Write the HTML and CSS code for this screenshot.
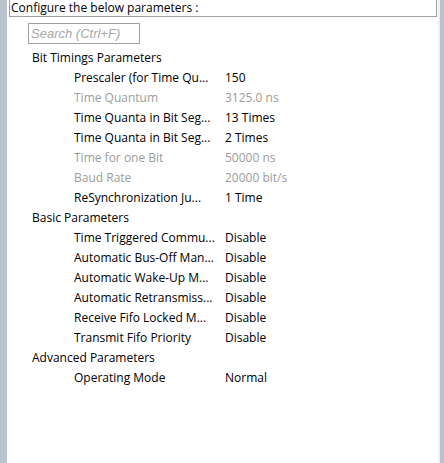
FILE: index.html
```html
<!DOCTYPE html>
<html lang="en">
<head>
  <meta charset="UTF-8" />
  <title>Parameter Settings</title>
  <meta name="viewport" content="width=device-width, initial-scale=1.0" />
  <link rel="stylesheet" href="styles.css">
</head>
<body>
  <div class="frame">
    <div class="side-bar"></div>
    <div class="panel">
      <div class="caption">Configure the below parameters :</div>
      <div class="search"><input type="text" placeholder="Search (Ctrl+F)" /></div>

      <div class="group">Bit Timings Parameters</div>
      <div class="param"><span class="name" title="Prescaler (for Time Quantum)">Prescaler (for Time Qu...</span><span class="value">150</span></div>
      <div class="param muted"><span class="name">Time Quantum</span><span class="value">3125.0 ns</span></div>
      <div class="param"><span class="name" title="Time Quanta in Bit Segment 1">Time Quanta in Bit Seg...</span><span class="value">13 Times</span></div>
      <div class="param"><span class="name" title="Time Quanta in Bit Segment 2">Time Quanta in Bit Seg...</span><span class="value">2 Times</span></div>
      <div class="param muted"><span class="name">Time for one Bit</span><span class="value">50000 ns</span></div>
      <div class="param muted"><span class="name">Baud Rate</span><span class="value">20000 bit/s</span></div>
      <div class="param"><span class="name" title="ReSynchronization Jump Width">ReSynchronization Ju...</span><span class="value">1 Time</span></div>

      <div class="group">Basic Parameters</div>
      <div class="param"><span class="name" title="Time Triggered Communication Mode">Time Triggered Commu...</span><span class="value">Disable</span></div>
      <div class="param"><span class="name" title="Automatic Bus-Off Management">Automatic Bus-Off Man...</span><span class="value">Disable</span></div>
      <div class="param"><span class="name" title="Automatic Wake-Up Mode">Automatic Wake-Up M...</span><span class="value">Disable</span></div>
      <div class="param"><span class="name" title="Automatic Retransmission">Automatic Retransmiss...</span><span class="value">Disable</span></div>
      <div class="param"><span class="name" title="Receive Fifo Locked Mode">Receive Fifo Locked M...</span><span class="value">Disable</span></div>
      <div class="param"><span class="name">Transmit Fifo Priority</span><span class="value">Disable</span></div>

      <div class="group">Advanced Parameters</div>
      <div class="param"><span class="name">Operating Mode</span><span class="value">Normal</span></div>
    </div>
    <div class="edge"></div>
  </div>
</body>
</html>
```

FILE: styles.css
```css
body {
  margin: 0;
  font-family: 'Open Sans', 'Liberation Sans', sans-serif;
  font-size: 12px;
  color: #000;
  background: #fff;
}

.frame {
  display: flex;
  height: 463px;
}

.side-bar {
  width: 7px;
  background: #b9c3cb;
}

.panel {
  flex: 1;
  padding-left: 2px;
}

.edge {
  width: 4px;
  border-left: 2px solid #f0f0f0;
  background: #b9c3cb;
}

.caption {
  height: 16px;
  line-height: 15px;
  border: 1px solid #a0a0a0;
  border-top: none;
  padding-left: 1px;
  color: #000;
  margin-right: 1px;
}

.search {
  margin: 6px 0 4px 19px;
}

.search input {
  box-sizing: border-box;
  width: 112px;
  height: 21px;
  margin: 0;
  padding: 0 2px;
  border: 1px solid #a0a0a0;
  font-family: 'Liberation Sans', Arial, sans-serif;
  font-size: 13px;
  font-style: italic;
  outline: none;
}

.search input::placeholder {
  color: #a8a8a8;
}

.group {
  height: 20px;
  line-height: 20px;
  padding-left: 23px;
}

.param {
  display: flex;
  height: 20px;
  line-height: 20px;
  padding-left: 65px;
}

.param .name {
  width: 151px;
  white-space: nowrap;
  overflow: hidden;
}

.param .value {
  white-space: nowrap;
}

.param.muted {
  color: #9c9c9c;
}
```
